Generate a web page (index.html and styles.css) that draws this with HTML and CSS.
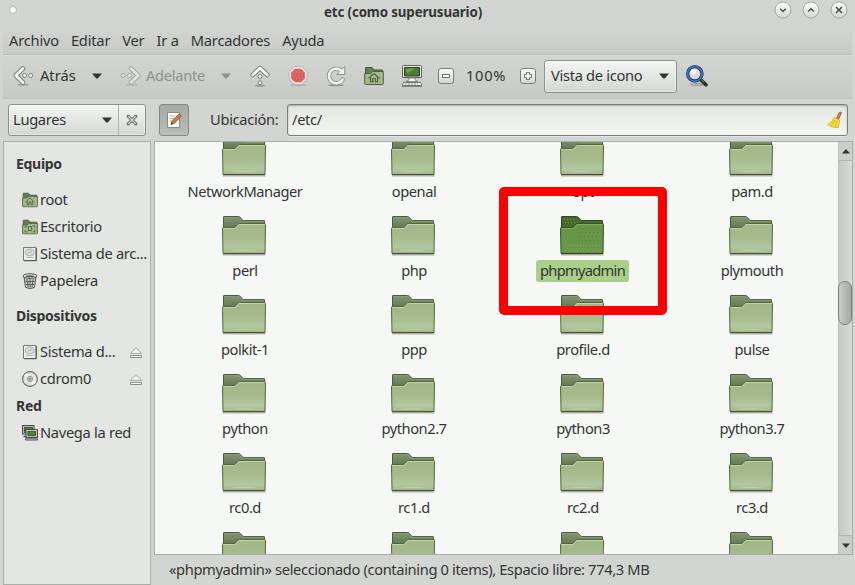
FILE: index.html
```
<!DOCTYPE html>
<html lang="es">
<head>
    <meta charset="UTF-8">
    <meta name="viewport" content="width=device-width, initial-scale=1.0">
    <title>etc (como superusuario)</title>
    <link rel="stylesheet" href="styles.css">
</head>
<body>
    <svg width="0" height="0" class="defs">
        <defs>
            <linearGradient id="verde" x1="0" y1="0" x2="0" y2="1">
                <stop offset="0" stop-color="#a2b787"/>
                <stop offset=".45" stop-color="#a5bb8b"/>
                <stop offset=".8" stop-color="#b1c79f"/>
                <stop offset="1" stop-color="#a5ba88"/>
            </linearGradient>
            <linearGradient id="fondo" x1="0" y1="0" x2="0" y2="1">
                <stop offset="0" stop-color="#849873"/>
                <stop offset=".3" stop-color="#657a55"/>
            </linearGradient>
            <linearGradient id="metal" x1="0" y1="0" x2="0" y2="1">
                <stop offset="0" stop-color="#ffffff"/>
                <stop offset="1" stop-color="#d3d5d1"/>
            </linearGradient>
        </defs>
        <symbol id="carpeta" viewBox="0 0 44 40">
            <path d="M1 38.7H43.5" stroke="#000" stroke-opacity=".3" stroke-width="1.6"/>
            <path d="M1.5 36V1Q1.5 .5 2 .5H16.5Q17.5 .5 18.2 1.3L20.5 4Q21 4.5 22 4.5H42Q42.5 4.5 42.5 5V36Z" fill="url(#fondo)" stroke="#4a5c40"/>
            <path d="M2.5 1.5H17L20 5.3H42" fill="none" stroke="#8a9d79" stroke-width=".8"/>
            <path d="M.5 12.5Q.5 11.5 1.5 11.5H12Q13 11.5 13.7 10.7L15.8 8.4Q16.5 7.5 17.5 7.5H42.5Q43.5 7.5 43.5 8.5L43 37.5H1Z" fill="url(#verde)" stroke="#53683f"/>
            <path d="M1.5 12.5H12.5Q13.5 12.5 14.3 11.5L16 9.5Q16.8 8.5 18 8.5H42.5" fill="none" stroke="#c4d2ae"/>
            <path d="M10 34.5H34" stroke="#ccd9bb" stroke-opacity=".35"/>
            <path d="M16 34.5H28" stroke="#ccd9bb" stroke-opacity=".5"/>
            <path d="M1.5 37.5H43" stroke="#43502f"/>
        </symbol>
        <symbol id="carpeta-sel" viewBox="0 0 44 40">
            <path d="M1 38.7H43.5" stroke="#000" stroke-opacity=".3" stroke-width="1.6"/>
            <path d="M1.5 36V1Q1.5 .5 2 .5H16.5Q17.5 .5 18.2 1.3L20.5 4Q21 4.5 22 4.5H42Q42.5 4.5 42.5 5V36Z" fill="#456b2b" stroke="#2f451f"/>
            <path d="M.5 12.5Q.5 11.5 1.5 11.5H12Q13 11.5 13.7 10.7L15.8 8.4Q16.5 7.5 17.5 7.5H42.5Q43.5 7.5 43.5 8.5L43 37.5H1Z" fill="#699549" stroke="#36522a"/>
            <path d="M1.5 12.5H12.5Q13.5 12.5 14.3 11.5L16 9.5Q16.8 8.5 18 8.5H42.5" fill="none" stroke="#83ab63"/>
            <path d="M19 12.5H40M17 16.5H41M20 20.5H40M18 24.5H41" stroke="#4f7b33" stroke-dasharray="1 3" stroke-opacity=".7"/>
            <path d="M5 29.5H40M7 32.5H38M5 34.5H40" stroke="#9bb66b" stroke-dasharray="1 2" stroke-opacity=".6"/>
            <path d="M4 3.5H16M5 6.5H19" stroke="#6a9150" stroke-dasharray="1 2"/>
            <path d="M1.5 37.5H43" stroke="#2c421f"/>
        </symbol>
        <symbol id="casa" viewBox="0 0 20 20">
            <path d="M1.5 17V2Q1.5 1.5 2 1.5H8L10 4H18.5V17Z" fill="#687e56" stroke="#43563a"/>
            <path d="M.7 7.5H6.5L8.5 5.5H19.3V17.5Q19.3 18.5 18.3 18.5H1.7Q.7 18.5 .7 17.5Z" fill="#a3b98a" stroke="#4d6141"/>
            <path d="M4.5 12.5L10 7.5L15.5 12.5M6.5 11.5V15.8H8.8V12.5H11.2V15.8H13.5V11.5" fill="none" stroke="#4e6340" stroke-width="1.1"/>
        </symbol>
        <symbol id="escritorio" viewBox="0 0 20 20">
            <path d="M1.5 17V2Q1.5 1.5 2 1.5H8L10 4H18.5V17Z" fill="#687e56" stroke="#43563a"/>
            <path d="M.7 7.5H6.5L8.5 5.5H19.3V17.5Q19.3 18.5 18.3 18.5H1.7Q.7 18.5 .7 17.5Z" fill="#a3b98a" stroke="#4d6141"/>
            <path d="M4 11V9.5H6.5M13.5 8.5H16V11M4 13.5V16H6.5M16 13.5V16H13.5M8 9.5H12V14.5H8Z" fill="none" stroke="#526943" stroke-width="1.2"/>
        </symbol>
        <symbol id="disco" viewBox="0 0 16 16">
            <path d="M1.5 1.5H14V14.5H1.5Z" fill="#eeefed" stroke="#797b77"/>
            <path d="M2 14.7H14.3V2" fill="none" stroke="#50524e"/>
            <ellipse cx="7.8" cy="6.5" rx="4.5" ry="3.4" fill="#dadcd9" stroke="#a4a6a2" stroke-width=".8"/>
            <path d="M4 11.5H11.5M6 7L10 5.5" stroke="#b5b7b3"/>
        </symbol>
        <symbol id="expulsar" viewBox="0 0 14 14">
            <path d="M1.5 8.5L7 2.5L12.5 8.5Z" fill="#f2f3f1" stroke="#a5a8a3"/>
            <path d="M1.5 10.5H12.5V12.5H1.5Z" fill="#fff" stroke="#8b8e89"/>
        </symbol>
        <symbol id="flecha" viewBox="0 0 10 6">
            <path d="M0 .5H10L6 5.2Q5 6 4 5.2Z" fill="currentColor"/>
        </symbol>
    </svg>

    <header class="titulo">
        <span class="punto"></span>
        <h1>etc (como superusuario)</h1>
        <div class="botones">
            <svg width="18" height="18" viewBox="0 0 18 18"><circle cx="9" cy="9" r="8" fill="url(#metal)" stroke="#a5a7a3"/><path d="M6.2 7.7L9 10.5L11.8 7.7" fill="none" stroke="#4a4c48" stroke-width="1.5"/></svg>
            <svg width="18" height="18" viewBox="0 0 18 18"><circle cx="9" cy="9" r="8" fill="url(#metal)" stroke="#a5a7a3"/><path d="M6.2 10.5L9 7.7L11.8 10.5" fill="none" stroke="#4a4c48" stroke-width="1.5"/></svg>
            <svg width="18" height="18" viewBox="0 0 18 18"><circle cx="9" cy="9" r="8" fill="url(#metal)" stroke="#a5a7a3"/><path d="M6 6L12 12M12 6L6 12" fill="none" stroke="#4a4c48" stroke-width="1.6"/></svg>
        </div>
    </header>

    <nav class="menu">
        <span>Archivo</span>
        <span>Editar</span>
        <span>Ver</span>
        <span>Ir a</span>
        <span>Marcadores</span>
        <span>Ayuda</span>
    </nav>

    <div class="herramientas">
        <div class="boton atras">
            <svg width="22" height="22" viewBox="0 0 22 22">
                <ellipse cx="11" cy="19.7" rx="6" ry="1" fill="#000" opacity=".22"/>
                <path d="M11 3.5L3.8 10.5L11 17.5" fill="none" stroke="#777975" stroke-width="4.6" stroke-linejoin="round" stroke-linecap="round"/>
                <path d="M11 3.5L3.8 10.5L11 17.5" fill="none" stroke="#f6f7f5" stroke-width="2.8" stroke-linejoin="round" stroke-linecap="round"/>
                <circle cx="12.5" cy="10.5" r="2" fill="#f6f7f5" stroke="#777975"/>
                <circle cx="18.7" cy="10.5" r="2" fill="#f6f7f5" stroke="#777975"/>
            </svg>
            <span>Atrás</span>
            <svg class="flecha" width="10" height="6"><use href="#flecha"/></svg>
        </div>
        <div class="boton adelante">
            <svg width="22" height="22" viewBox="0 0 22 22" opacity=".5">
                <ellipse cx="12" cy="19.7" rx="6" ry="1" fill="#000" opacity=".22"/>
                <path d="M11 3.5L18.2 10.5L11 17.5" fill="none" stroke="#777975" stroke-width="4.6" stroke-linejoin="round" stroke-linecap="round"/>
                <path d="M11 3.5L18.2 10.5L11 17.5" fill="none" stroke="#f6f7f5" stroke-width="2.8" stroke-linejoin="round" stroke-linecap="round"/>
                <circle cx="9.5" cy="10.5" r="2" fill="#f6f7f5" stroke="#777975"/>
                <circle cx="3.3" cy="10.5" r="2" fill="#f6f7f5" stroke="#777975"/>
            </svg>
            <span>Adelante</span>
            <svg class="flecha" width="10" height="6"><use href="#flecha"/></svg>
        </div>
        <svg class="arriba" width="22" height="24" viewBox="0 0 22 24">
            <ellipse cx="11" cy="21.8" rx="5" ry="1" fill="#000" opacity=".25"/>
            <path d="M3.7 11L11 4L18.3 11" fill="none" stroke="#777975" stroke-width="4.6" stroke-linejoin="round" stroke-linecap="round"/>
            <path d="M3.7 11L11 4L18.3 11" fill="none" stroke="#f6f7f5" stroke-width="2.8" stroke-linejoin="round" stroke-linecap="round"/>
            <circle cx="11" cy="12.5" r="2" fill="#f6f7f5" stroke="#777975"/>
            <circle cx="11" cy="18.8" r="2" fill="#f6f7f5" stroke="#777975"/>
        </svg>
        <svg class="parar" width="22" height="22" viewBox="0 0 22 22">
            <ellipse cx="11" cy="20" rx="8" ry="1.2" fill="#000" opacity=".15"/>
            <path d="M7.3 1.5H14.7L20 6.8V14.2L14.7 19.5H7.3L2 14.2V6.8Z" fill="#e8e9e7" stroke="#b4b6b2"/>
            <path d="M8 3.8H14L17.9 7.6V13.4L14 17.3H8L4.1 13.4V7.6Z" fill="#db6059"/>
            <path d="M6 7H16M5 10H17M6 13H16" stroke="#ea8378" stroke-dasharray="1 2"/>
        </svg>
        <svg class="recargar" width="22" height="22" viewBox="0 0 22 22">
            <ellipse cx="11" cy="20.2" rx="8" ry="1.1" fill="#000" opacity=".25"/>
            <path d="M17.6 14.5A7.3 7.3 0 1 1 16 5.4" fill="none" stroke="#8b8d89" stroke-width="4.4" stroke-linecap="round"/>
            <path d="M19.8 1.5V9.5H11.8Z" fill="#f2f3f1" stroke="#8b8d89" stroke-linejoin="round"/>
            <path d="M17.6 14.5A7.3 7.3 0 1 1 16 5.4" fill="none" stroke="#f2f3f1" stroke-width="2.6" stroke-linecap="round"/>
        </svg>
        <svg class="inicio" width="20" height="20"><use href="#casa"/></svg>
        <svg class="ordenador" width="22" height="24" viewBox="0 0 22 24">
            <path d="M1.5 2.5Q1.5 1.5 2.5 1.5H19.5Q20.5 1.5 20.5 2.5V13.5H1.5Z" fill="#f0f1ef" stroke="#5f615d"/>
            <path d="M3.5 3.5H18.5V12H3.5Z" fill="#4b8030" stroke="#26391c"/>
            <path d="M4 6L9 4H14L7 9Z" fill="#70a052"/>
            <path d="M8 14H14V16L17 17.5H5L8 16Z" fill="#fff" stroke="#777975" stroke-width=".8"/>
            <path d="M2.5 18.5H19.5L20.8 21.5H1.2Z" fill="#f0f1ef" stroke="#777975"/>
            <path d="M4 20H17" stroke="#8b8d89" stroke-dasharray="2 1"/>
            <path d="M1 22.5H21" stroke="#000" stroke-opacity=".35"/>
        </svg>
        <svg class="menos" width="16" height="16" viewBox="0 0 16 16"><rect x=".5" y=".5" width="15" height="15" rx="2.5" fill="url(#metal)" stroke="#7c7e7a"/><rect x="4.5" y="6.5" width="7" height="3" fill="#fff" stroke="#71736f"/></svg>
        <span class="zoom">100%</span>
        <svg class="mas" width="16" height="16" viewBox="0 0 16 16"><rect x=".5" y=".5" width="15" height="15" rx="2.5" fill="url(#metal)" stroke="#7c7e7a"/><path d="M6.5 4.5H9.5V6.5H11.5V9.5H9.5V11.5H6.5V9.5H4.5V6.5H6.5Z" fill="#fff" stroke="#71736f"/></svg>
        <div class="combo vista">
            <span>Vista de icono</span>
            <svg class="flecha" width="10" height="6"><use href="#flecha"/></svg>
        </div>
        <svg class="buscar" width="24" height="24" viewBox="0 0 24 24">
            <ellipse cx="13" cy="20.5" rx="8" ry="1.8" fill="#000" opacity=".18"/>
            <path d="M15.5 15.5L21 20.8" stroke="#2e302d" stroke-width="3.6" stroke-linecap="round"/>
            <path d="M16 15.5L19 18.2" stroke="#8b8d89" stroke-width="1"/>
            <circle cx="9.8" cy="9.8" r="7.2" fill="#d9dcda" stroke="#223f70" stroke-width="3.4"/>
            <circle cx="9.8" cy="9.8" r="7.3" fill="none" stroke="#4475b9" stroke-width="1.6"/>
            <circle cx="8.6" cy="8" r="3" fill="#f3f4f2"/>
        </svg>
    </div>

    <div class="ubicacion">
        <div class="combo lugares">
            <span>Lugares</span>
            <svg class="flecha" width="10" height="6"><use href="#flecha"/></svg>
            <div class="cerrar">
                <svg width="12" height="12" viewBox="0 0 12 12"><path d="M2.2 2.2L9.8 9.8M9.8 2.2L2.2 9.8" stroke="#70726e" stroke-width="3.2" stroke-linecap="round"/><path d="M2.2 2.2L9.8 9.8M9.8 2.2L2.2 9.8" stroke="#dddfdc" stroke-width="1.1"/></svg>
            </div>
        </div>
        <div class="editar">
            <svg width="18" height="18" viewBox="0 0 18 18">
                <path d="M2.5 1.5H14.5V16.5H2.5Z" fill="#fafbf9" stroke="#898b87"/>
                <path d="M4.5 5H10M4.5 7.5H9M4.5 10H7" stroke="#b9bbb7"/>
                <path d="M6 13.5L7.2 10L14 3L16.3 5.2L9.5 12.2Z" fill="#d6803c" stroke="#804a20" stroke-width=".8"/>
                <path d="M6 13.5L6.8 11.4L8 12.6Z" fill="#222"/>
            </svg>
        </div>
        <label>Ubicación:</label>
        <div class="entrada">
            <span>/etc/</span>
            <svg width="16" height="18" viewBox="0 0 16 18">
                <path d="M9.5 7.5L12 1.8Q13.5 .4 14.6 1.7L11.8 7.8Z" fill="#cd8651" stroke="#8c5227" stroke-width=".8"/>
                <path d="M7.5 6.5L12.5 9Q11.8 13 11.5 16.5Q5 17 .8 13.6Q5 11 7.5 6.5Z" fill="#f2df3b" stroke="#c7ae16" stroke-width=".8"/>
                <path d="M8 9L4.5 14.5M10 10L8 15.5" stroke="#c7ae16" stroke-width=".8"/>
            </svg>
        </div>
    </div>

    <main>
        <aside>
            <h2>Equipo</h2>
            <div class="sitio"><svg width="16" height="16"><use href="#casa"/></svg><span>root</span></div>
            <div class="sitio"><svg width="16" height="16"><use href="#escritorio"/></svg><span>Escritorio</span></div>
            <div class="sitio"><svg width="16" height="16"><use href="#disco"/></svg><span>Sistema de arc...</span></div>
            <div class="sitio">
                <svg width="16" height="16" viewBox="0 0 16 16">
                    <path d="M2 3.5L3.5 14.5Q8 16.5 12.5 14.5L14 3.5Z" fill="#c9cbc7" stroke="#555753"/>
                    <path d="M5 6L6 14M8 6V14.5M11 6L10 14M3.5 8.5H12.5M4 11.5H12" stroke="#555753" stroke-width=".9"/>
                    <ellipse cx="8" cy="3" rx="7" ry="2.3" fill="#eeefec" stroke="#4a4c48"/>
                    <ellipse cx="8" cy="3.2" rx="4.5" ry="1" fill="#555753"/>
                </svg><span>Papelera</span>
            </div>
            <h2>Dispositivos</h2>
            <div class="sitio"><svg width="16" height="16"><use href="#disco"/></svg><span>Sistema d...</span><svg class="expulsar" width="14" height="14"><use href="#expulsar"/></svg></div>
            <div class="sitio">
                <svg width="16" height="16" viewBox="0 0 16 16">
                    <circle cx="8" cy="8" r="7.4" fill="#e2e4e0" stroke="#686a66" stroke-width="1.1"/>
                    <path d="M8 8L2 4.5L5 1.8ZM8 8L14 11.5L11 14.2Z" fill="#fff"/>
                    <circle cx="8" cy="8" r="2.6" fill="#d2d4d0" stroke="#969894"/>
                    <circle cx="8" cy="8" r="1" fill="#fff" stroke="#686a66" stroke-width=".8"/>
                </svg><span>cdrom0</span><svg class="expulsar" width="14" height="14"><use href="#expulsar"/></svg>
            </div>
            <h2 class="red">Red</h2>
            <div class="sitio">
                <svg width="16" height="16" viewBox="0 0 16 16">
                    <path d="M.6 .6H12V9H.6Z" fill="#e3e5e1" stroke="#464844" stroke-width="1.1"/>
                    <path d="M2.3 2.5H10.5V7.5H2.3Z" fill="#567f3c" stroke="#2a3a20" stroke-width=".8"/>
                    <path d="M1.5 11.5H5" stroke="#464844" stroke-width="1.5"/>
                    <path d="M4 4.5H15.4V12.5H4Z" fill="#e3e5e1" stroke="#464844" stroke-width="1.1"/>
                    <path d="M5.8 6.3H13.6V10.8H5.8Z" fill="#567f3c" stroke="#2a3a20" stroke-width=".8"/>
                    <path d="M3.5 15H15.5V13.8H3.5Z" fill="#fff" stroke="#464844" stroke-width=".9"/>
                </svg><span>Navega la red</span>
            </div>
        </aside>

        <section class="panel">
            <div class="iconos">
                <div class="item"><svg><use href="#carpeta"/></svg><span>NetworkManager</span></div>
                <div class="item"><svg><use href="#carpeta"/></svg><span>openal</span></div>
                <div class="item"><svg><use href="#carpeta"/></svg><span>opt</span></div>
                <div class="item"><svg><use href="#carpeta"/></svg><span>pam.d</span></div>
                <div class="item"><svg><use href="#carpeta"/></svg><span>perl</span></div>
                <div class="item"><svg><use href="#carpeta"/></svg><span>php</span></div>
                <div class="item sel"><svg><use href="#carpeta-sel"/></svg><span>phpmyadmin</span></div>
                <div class="item"><svg><use href="#carpeta"/></svg><span>plymouth</span></div>
                <div class="item"><svg><use href="#carpeta"/></svg><span>polkit-1</span></div>
                <div class="item"><svg><use href="#carpeta"/></svg><span>ppp</span></div>
                <div class="item"><svg><use href="#carpeta"/></svg><span>profile.d</span></div>
                <div class="item"><svg><use href="#carpeta"/></svg><span>pulse</span></div>
                <div class="item"><svg><use href="#carpeta"/></svg><span>python</span></div>
                <div class="item"><svg><use href="#carpeta"/></svg><span>python2.7</span></div>
                <div class="item"><svg><use href="#carpeta"/></svg><span>python3</span></div>
                <div class="item"><svg><use href="#carpeta"/></svg><span>python3.7</span></div>
                <div class="item"><svg><use href="#carpeta"/></svg><span>rc0.d</span></div>
                <div class="item"><svg><use href="#carpeta"/></svg><span>rc1.d</span></div>
                <div class="item"><svg><use href="#carpeta"/></svg><span>rc2.d</span></div>
                <div class="item"><svg><use href="#carpeta"/></svg><span>rc3.d</span></div>
                <div class="item"><svg><use href="#carpeta"/></svg></div>
                <div class="item"><svg><use href="#carpeta"/></svg></div>
                <div class="item"><svg><use href="#carpeta"/></svg></div>
                <div class="item"><svg><use href="#carpeta"/></svg></div>
            </div>
            <div class="scroll">
                <div class="paso"><svg width="8" height="5" viewBox="0 0 8 5"><path d="M0 4.5L4 0L8 4.5Z" fill="#333532"/></svg></div>
                <div class="carril"><div class="barra"></div></div>
                <div class="paso abajo"><svg width="8" height="5" viewBox="0 0 8 5"><path d="M0 .5L4 5L8 .5Z" fill="#333532"/></svg></div>
            </div>
            <div class="marco"></div>
        </section>
    </main>

    <footer>«phpmyadmin» seleccionado (containing 0 items), Espacio libre: 774,3 MB</footer>
</body>
</html>
```
FILE: styles.css
```
* {
    box-sizing: border-box;
}

body {
    margin: 0;
    width: 855px;
    height: 585px;
    overflow: hidden;
    background-color: #d3d5d2;
    color: #333532;
    font: normal 14.67px/20px "Noto Sans", sans-serif;
    letter-spacing: -0.3px;
    white-space: nowrap;
}

svg {
    display: block;
    flex: none;
}

.defs {
    height: 0;
}

/* barra de titulo */
.titulo {
    height: 32px;
    padding: 0 7px 0 9px;
    display: grid;
    grid-template-columns: 72px 1fr 72px;
    align-items: start;
}

.punto {
    width: 8px;
    height: 8px;
    margin-top: 6px;
    border-radius: 50%;
    background-color: #f8f9f7;
    border: 1px solid #b9bbb8;
}

.titulo h1 {
    margin: 2px 0 0;
    padding-right: 51px;
    text-align: center;
    font-size: 13.33px;
    line-height: 20px;
    letter-spacing: -0.13px;
}

.botones {
    display: flex;
    justify-content: flex-end;
    gap: 10px;
    margin-top: 1px;
}

.menu {
    height: 23px;
    margin: 0 3px;
    padding: 0 6px;
    display: flex;
    gap: 12px;
    line-height: 16px;
    letter-spacing: -0.2px;
    background: linear-gradient(#d1d3d0, #c9cbc8);
    border-bottom: 1px solid #bfc1be;
}

.herramientas {
    height: 44px;
    margin: 0 3px;
    padding: 0 0 2px 9px;
    display: flex;
    align-items: center;
    background: linear-gradient(#d3d5d2, #c8cac7);
    border-top: 1px solid #d9dbd8;
    border-bottom: 1px solid #bfc1be;
}

.boton {
    display: flex;
    align-items: center;
    width: 108px;
}

.herramientas span,
.combo span,
.entrada span,
.sitio span {
    padding-bottom: 2px;
}

.boton span {
    margin-left: 6px;
    width: 52px;
}

.atras span {
    letter-spacing: 0;
}

.adelante {
    width: 129px;
    color: #8f918d;
}

.adelante span {
    margin-left: 4px;
    width: 75px;
}

.arriba { margin-right: 16px; }
.parar { margin-right: 16px; }
.recargar { margin-right: 17px; }
.inicio { margin-right: 17px; }
.ordenador { margin-right: 15px; }
.menos { margin-right: 12px; }
.zoom { width: 54px; letter-spacing: 0.7px; }
.mas { margin-right: 8px; }
.buscar { margin-left: 8px; }

.combo {
    height: 33px;
    display: flex;
    align-items: center;
    border: 1px solid #8e908d;
    border-radius: 3px;
    background: linear-gradient(#f4f5f3, #e5e7e4 50%, #d5d7d4);
    box-shadow: inset 0 0 0 1px rgba(255, 255, 255, 0.4);
}

.vista {
    width: 133px;
    padding: 0 7px 0 6px;
    justify-content: space-between;
}

.ubicacion {
    height: 42px;
    padding: 5px 7px 0 8px;
    display: flex;
}

.lugares {
    height: 32px;
    width: 138px;
    padding-left: 4px;
}

.lugares span {
    width: 89px;
}

.cerrar {
    width: 27px;
    height: 30px;
    margin-left: 6px;
    display: flex;
    align-items: center;
    justify-content: center;
    border-left: 1px solid #b0b2af;
}

.editar {
    width: 30px;
    height: 32px;
    margin-left: 13px;
    display: flex;
    align-items: center;
    justify-content: center;
    border: 1px solid #878986;
    border-radius: 3px;
    background: linear-gradient(#a9aba8, #b0b2af 50%, #bcbebb);
}

.ubicacion label {
    width: 98px;
    padding-left: 21px;
    line-height: 30px;
}

.entrada {
    flex: 1;
    height: 32px;
    padding: 0 4px;
    display: flex;
    align-items: center;
    justify-content: space-between;
    border: 1px solid #7d7f7c;
    border-radius: 3px;
    background: linear-gradient(#e4e6e3, #f4f6f2);
    box-shadow: inset 0 1px 2px rgba(0, 0, 0, 0.25), 0 1px 0 #e4e6e3;
}

main {
    height: 414px;
    padding: 0 2px 0 3px;
    display: flex;
    gap: 3px;
}

aside {
    width: 148px;
    height: 444px;
    border: 1px solid #acaeab;
    background-color: #e4e6e3;
}

aside h2 {
    margin: 0;
    padding-left: 12px;
    font-size: 14px;
    line-height: 44px;
}

aside h2.red {
    line-height: 27px;
}

.sitio {
    height: 27px;
    padding-left: 18px;
    display: flex;
    align-items: center;
}

.sitio span {
    margin-left: 2px;
}

.expulsar {
    margin-left: auto;
    margin-right: 7px;
}

.panel {
    position: relative;
    flex: 1;
    display: flex;
    border: 1px solid #acaeab;
    background-color: #f6f8f5;
    overflow: hidden;
}

.iconos {
    width: 683px;
    margin-top: -5px;
    padding-left: 5px;
    display: grid;
    grid-template-columns: repeat(4, 169px);
    grid-auto-rows: 79px;
}

.item {
    display: flex;
    flex-direction: column;
    align-items: center;
}

.item svg {
    width: 44px;
    height: 40px;
    margin-right: 1px;
}

.item span {
    margin-top: 4px;
    padding: 0 3px 2px 4px;
    border-radius: 3px;
    line-height: 20px;
    letter-spacing: -0.45px;
}

.item.sel span {
    padding: 0 4px 2px 4px;
    background-color: #a9cf88;
    letter-spacing: -0.7px;
}

.scroll {
    width: 14px;
    display: flex;
    flex-direction: column;
    background: linear-gradient(to right, #c8cac7, #d8dad7);
    border-left: 1px solid #c0c2bf;
}

.paso {
    height: 19px;
    display: flex;
    align-items: center;
    justify-content: center;
    background-color: #cccecb;
    border-bottom: 1px solid #b5b7b4;
}

.abajo {
    border-top: 1px solid #b5b7b4;
    border-bottom: none;
}

.carril {
    flex: 1;
    padding-top: 120px;
}

.barra {
    width: 14px;
    height: 44px;
    margin-left: -1px;
    border: 1px solid #7d7f7c;
    border-radius: 7px;
    background: linear-gradient(to right, #cccecb, #a6a8a5);
}

/* recuadro rojo sobre la carpeta */
.marco {
    position: absolute;
    left: 344px;
    top: 45px;
    width: 168px;
    height: 128px;
    border: 9px solid #ff0000;
    border-radius: 5px;
}

footer {
    height: 30px;
    padding-left: 169px;
    line-height: 28px;
    letter-spacing: -0.36px;
}
```
